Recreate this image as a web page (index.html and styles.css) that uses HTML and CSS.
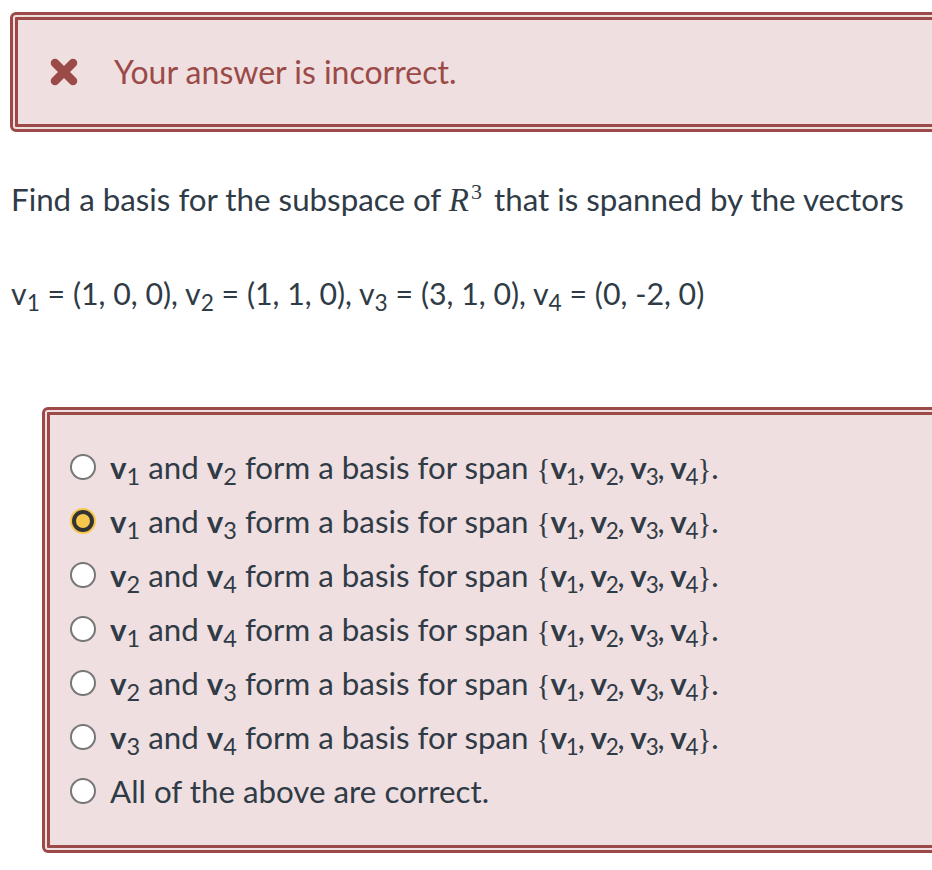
FILE: index.html
```html
<!DOCTYPE html>
<html>
<head>
<meta charset="utf-8">
<link rel="stylesheet" href="styles.css">
</head>
<body>
<div class="page">
  <div class="alert">
    <svg class="xicon" viewBox="0 0 28 28" width="28" height="28" aria-hidden="true">
      <path d="M5 5 L23 23 M23 5 L5 23" stroke="#9b4a47" stroke-width="8.5" stroke-linecap="round" fill="none"/>
    </svg>
    <span class="alert-text">Your answer is incorrect.</span>
  </div>

  <p class="question">Find a basis for the subspace of <span class="math"><i>R</i><sup>3</sup></span> that is spanned by the vectors</p>

  <p class="vectors">v<sub>1</sub> = (1, 0, 0), v<sub>2</sub> = (1, 1, 0), v<sub>3</sub> = (3, 1, 0), v<sub>4</sub> = (0, -2, 0)</p>

  <div class="answers">
    <label class="opt"><span class="radio"></span><span class="otext"><b>v</b><sub>1</sub> and <b>v</b><sub>2</sub> form a basis for span <span class="set"><span class="brace">{</span><b>v</b><sub>1</sub>, <b>v</b><sub>2</sub>, <b>v</b><sub>3</sub>, <b>v</b><sub>4</sub><span class="brace">}</span>.</span></span></label>
    <label class="opt"><span class="radio selected"></span><span class="otext"><b>v</b><sub>1</sub> and <b>v</b><sub>3</sub> form a basis for span <span class="set"><span class="brace">{</span><b>v</b><sub>1</sub>, <b>v</b><sub>2</sub>, <b>v</b><sub>3</sub>, <b>v</b><sub>4</sub><span class="brace">}</span>.</span></span></label>
    <label class="opt"><span class="radio"></span><span class="otext"><b>v</b><sub>2</sub> and <b>v</b><sub>4</sub> form a basis for span <span class="set"><span class="brace">{</span><b>v</b><sub>1</sub>, <b>v</b><sub>2</sub>, <b>v</b><sub>3</sub>, <b>v</b><sub>4</sub><span class="brace">}</span>.</span></span></label>
    <label class="opt"><span class="radio"></span><span class="otext"><b>v</b><sub>1</sub> and <b>v</b><sub>4</sub> form a basis for span <span class="set"><span class="brace">{</span><b>v</b><sub>1</sub>, <b>v</b><sub>2</sub>, <b>v</b><sub>3</sub>, <b>v</b><sub>4</sub><span class="brace">}</span>.</span></span></label>
    <label class="opt"><span class="radio"></span><span class="otext"><b>v</b><sub>2</sub> and <b>v</b><sub>3</sub> form a basis for span <span class="set"><span class="brace">{</span><b>v</b><sub>1</sub>, <b>v</b><sub>2</sub>, <b>v</b><sub>3</sub>, <b>v</b><sub>4</sub><span class="brace">}</span>.</span></span></label>
    <label class="opt"><span class="radio"></span><span class="otext"><b>v</b><sub>3</sub> and <b>v</b><sub>4</sub> form a basis for span <span class="set"><span class="brace">{</span><b>v</b><sub>1</sub>, <b>v</b><sub>2</sub>, <b>v</b><sub>3</sub>, <b>v</b><sub>4</sub><span class="brace">}</span>.</span></span></label>
    <label class="opt"><span class="radio"></span><span class="otext">All of the above are correct.</span></label>
  </div>
</div>
</body>
</html>
```

FILE: styles.css
```css
html, body {
  margin: 0;
  padding: 0;
  background: #ffffff;
  overflow: hidden;
}

.page {
  width: 932px;
  height: 870px;
  overflow: hidden;
  padding-top: 12px;
  box-sizing: border-box;
  font-family: Lato, "Open Sans", sans-serif;
  color: #2f3b46;
}

.alert {
  margin-left: 10px;
  width: 960px;
  height: 120px;
  box-sizing: border-box;
  border: 8px double #9b4a47;
  border-radius: 6px;
  background: #efdfe0;
  display: flex;
  align-items: center;
  padding-left: 32px;
  gap: 36px;
}

.xicon {
  flex: none;
  display: block;
}

.alert-text {
  color: #9b4a47;
  font-size: 32px;
  line-height: 40px;
}

.question {
  margin: 47px 0 0 11px;
  font-size: 31.3px;
  line-height: 40px;
  white-space: nowrap;
}

.math {
  font-family: "Liberation Serif", "Times New Roman", serif;
  font-size: 33px;
  margin-right: 4px;
}

.math i {
  font-weight: normal;
  font-style: italic;
}

.math sup {
  font-size: 22px;
  font-weight: normal;
  vertical-align: 12px;
  line-height: 0;
  margin-left: 2px;
}

.vectors {
  margin: 53px 0 0 11px;
  font-size: 30.3px;
  line-height: 40px;
  white-space: nowrap;
}

sub {
  font-size: 0.75em;
  vertical-align: -0.26em;
  line-height: 0;
}

.answers {
  margin-left: 42px;
  margin-top: 94px;
  width: 960px;
  height: 446px;
  box-sizing: border-box;
  border: 8px double #9b4a47;
  border-radius: 6px;
  background: #efdfe0;
  padding: 25px 0 27px 20px;
  display: flex;
  flex-direction: column;
}

.opt {
  height: 54px;
  display: flex;
  align-items: center;
  gap: 14px;
  font-size: 31.3px;
  white-space: nowrap;
}

.radio {
  flex: none;
  width: 26px;
  height: 26px;
  box-sizing: border-box;
  border-radius: 50%;
  border: 2px solid #777777;
  background: #ffffff;
}

.radio.selected {
  width: 22px;
  height: 22px;
  margin: 0 2px;
  border: 4px solid #333333;
  background: #f5c84c;
  box-shadow: 0 0 0 2px #f5c84c;
}

.otext b {
  font-weight: 700;
}

.set {
  letter-spacing: -1.2px;
}

.set sub {
  font-size: 0.72em;
}

.brace {
  font-family: "Liberation Serif", "Times New Roman", serif;
  font-weight: normal;
  font-size: 29px;
  letter-spacing: 0;
}
```
